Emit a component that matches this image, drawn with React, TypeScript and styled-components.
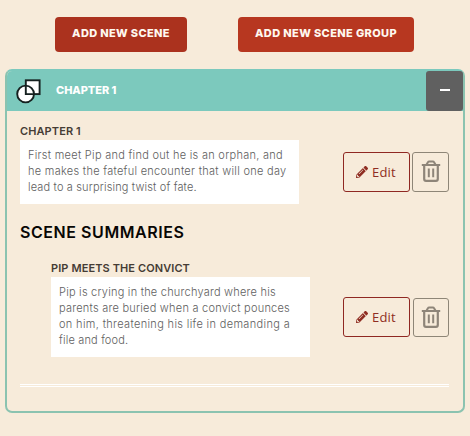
import React from 'react';
import styled, { createGlobalStyle } from 'styled-components';
import { FaPencilAlt } from 'react-icons/fa';

const GlobalStyle = createGlobalStyle`
  * { box-sizing: border-box; }
  body {
    margin: 0;
    background: #f7ebda;
    font-family: Inter, sans-serif;
    font-size: 11px;
  }
`;

const Page = styled.main`
  height: 436px;
  padding: 17px 5px 0;
`;

const Toolbar = styled.div`
  display: flex;
  gap: 51px;
  padding-left: 50px;
  margin-bottom: 17px;
`;

const AddButton = styled.button<{ $width: number; $tone: string; $tracking: number }>`
  width: ${(p) => p.$width}px;
  height: 35px;
  padding: 0 0 4px;
  border: 0;
  border-radius: 4px;
  background: ${(p) => p.$tone};
  color: #fff8ef;
  font: 800 11px/16px Inter, sans-serif;
  letter-spacing: ${(p) => p.$tracking}px;
  white-space: nowrap;
`;

const Panel = styled.section`
  height: 344px;
  border: 2px solid #8bc3b0;
  border-top-color: #7cc9bd;
  border-radius: 7px;
`;

const PanelHeader = styled.header`
  display: flex;
  align-items: center;
  height: 40px;
  padding-left: 9px;
  border-radius: 5px 5px 0 0;
  background: #7cc9bd;
`;

const PanelTitle = styled.h2`
  flex: 1;
  margin: 0 0 0 15px;
  padding-bottom: 2px;
  color: #fff;
  font-size: 11px;
  font-weight: 800;
  line-height: 16px;
  letter-spacing: -0.05px;
`;

const CollapseButton = styled.button`
  display: flex;
  align-items: center;
  justify-content: center;
  width: 37px;
  height: 40px;
  padding: 0 0 2px;
  border: 0;
  border-radius: 3px;
  background: #606060;
`;

const Minus = styled.span`
  width: 10px;
  height: 2px;
  background: #fff;
`;

const PanelBody = styled.div`
  padding: 12px 14px 0 13px;
`;

const Label = styled.h3<{ $indent?: number }>`
  margin: 0 0 1px ${(p) => p.$indent ?? 0}px;
  color: #453c35;
  font-size: 11px;
  font-weight: 600;
  line-height: 16px;
  letter-spacing: 0.1px;
`;

const SectionHeading = styled.h2`
  margin: 16px 0 16px;
  color: #080604;
  font-size: 16px;
  font-weight: 600;
  line-height: 24px;
  letter-spacing: 0.56px;
`;

const Entry = styled.div<{ $indent?: number }>`
  display: flex;
  align-items: center;
  justify-content: space-between;
  padding-left: ${(p) => p.$indent ?? 0}px;
`;

const Summary = styled.div<{ $width: number; $height: number }>`
  width: ${(p) => p.$width}px;
  height: ${(p) => p.$height}px;
  padding: 7px 8px;
  background: #fff;
  color: #606060;
  font-weight: 300;
  line-height: 16px;
  white-space: nowrap;
`;

const Line = styled.span<{ $tracking: number }>`
  display: block;
  letter-spacing: ${(p) => p.$tracking}px;
`;

const Actions = styled.div<{ $gap: number }>`
  display: flex;
  align-items: flex-end;
  gap: ${(p) => p.$gap}px;
`;

const EditButton = styled.button`
  display: flex;
  align-items: center;
  justify-content: center;
  gap: 4px;
  width: 67px;
  height: 40px;
  padding: 0 1px 1px 0;
  border: 1px solid #8f2822;
  border-radius: 3px;
  background: transparent;
  color: #8f2d22;
  font: 400 13px/18px 'Open Sans', sans-serif;
  letter-spacing: 0.2px;
`;

const DeleteButton = styled.button<{ $width: number; $height: number }>`
  display: flex;
  align-items: center;
  justify-content: center;
  width: ${(p) => p.$width}px;
  height: ${(p) => p.$height}px;
  padding: 0 0 2px;
  border: 1px solid #8e8677;
  border-radius: 3px;
  background: transparent;
  color: #8e8579;
`;

const Divider = styled.hr`
  height: 3px;
  margin: 27px 0 0;
  border: 0;
  border-top: 3px double #fff;
`;

const ShapesIcon = () => (
  <svg width="25" height="25" viewBox="0 0 25 25" stroke="#15201f" strokeWidth="1.9">
    <rect x="9.8" y="1.3" width="13.8" height="13.8" fill="#fff" />
    <circle cx="9.6" cy="15" r="8.4" fill="#fff" />
    <path d="M9.8 6.8V15.1H18" fill="none" />
  </svg>
);

const TrashIcon = () => (
  <svg width="20" height="22" viewBox="0 0 20 22" fill="none" stroke="currentColor" strokeWidth="2">
    <path d="M0.8 5H19.2M5.6 4.6L6.9 2.3Q7.3 1.5 8.2 1.5H11.8Q12.7 1.5 13.1 2.3L14.4 4.6" />
    <path d="M3.2 5V19Q3.2 20.8 5 20.8H15Q16.8 20.8 16.8 19V5" strokeWidth="2.2" />
    <path d="M7.8 8.5V17.3M12.2 8.5V17.3" />
  </svg>
);

const RowActions = ({ gap, width, height }: { gap: number; width: number; height: number }) => (
  <Actions $gap={gap}>
    <EditButton><FaPencilAlt size={12} />Edit</EditButton>
    <DeleteButton $width={width} $height={height} aria-label="Delete"><TrashIcon /></DeleteButton>
  </Actions>
);

type TextLine = [text: string, tracking: number];

const chapterLines: TextLine[] = [
  ['First meet Pip and find out he is an orphan, and', 0.28],
  ['he makes the fateful encounter that will one day', 0.286],
  ['lead to a surprising twist of fate.', 0.15],
];

const sceneLines: TextLine[] = [
  ['Pip is crying in the churchyard where his', 0.225],
  ['parents are buried when a convict pounces', 0.233],
  ['on him, threatening his life in demanding a', 0.34],
  ['file and food.', 0.17],
];

const renderLines = (lines: TextLine[]) =>
  lines.map(([text, tracking]) => <Line key={text} $tracking={tracking}>{text}</Line>);

export default function App() {
  return (
    <>
      <GlobalStyle />
      <Page>
        <Toolbar>
          <AddButton $width={132} $tone="#ab321e" $tracking={0.35}>ADD NEW SCENE</AddButton>
          <AddButton $width={176} $tone="#b73720" $tracking={0.375}>ADD NEW SCENE GROUP</AddButton>
        </Toolbar>
        <Panel>
          <PanelHeader>
            <ShapesIcon />
            <PanelTitle>CHAPTER 1</PanelTitle>
            <CollapseButton aria-label="Collapse"><Minus /></CollapseButton>
          </PanelHeader>
          <PanelBody>
            <Label>CHAPTER 1</Label>
            <Entry>
              <Summary $width={279} $height={64}>{renderLines(chapterLines)}</Summary>
              <RowActions gap={2} width={37} height={40} />
            </Entry>
            <SectionHeading>SCENE SUMMARIES</SectionHeading>
            <Label $indent={31}>PIP MEETS THE CONVICT</Label>
            <Entry $indent={31}>
              <Summary $width={259} $height={80}>{renderLines(sceneLines)}</Summary>
              <RowActions gap={3} width={36} height={39} />
            </Entry>
            <Divider />
          </PanelBody>
        </Panel>
      </Page>
    </>
  );
}
